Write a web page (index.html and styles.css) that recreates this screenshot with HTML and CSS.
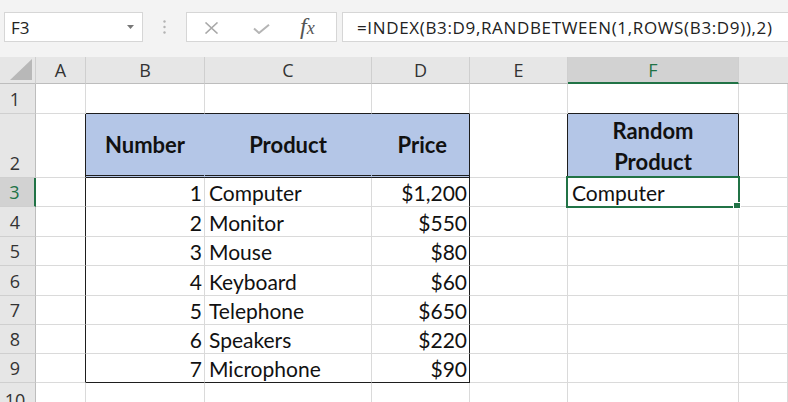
FILE: index.html
```html
<!DOCTYPE html>
<html>
<head>
<meta charset="utf-8">
<link rel="stylesheet" href="styles.css">
</head>
<body>
<div class="app">
  <div class="toolbar">
    <div class="namebox">
      <span class="nb-text">F3</span>
      <svg class="nb-arrow" width="7" height="4" viewBox="0 0 7 4"><path d="M0 0H7L3.5 4Z" fill="#777"/></svg>
    </div>
    <div class="sep">
      <svg width="3" height="14" viewBox="0 0 3 14"><circle cx="1.5" cy="1.5" r="1.2" fill="#b3b3b3"/><circle cx="1.5" cy="7" r="1.2" fill="#b3b3b3"/><circle cx="1.5" cy="12.5" r="1.2" fill="#b3b3b3"/></svg>
    </div>
    <div class="btns">
      <svg class="ic-x" width="15" height="12" viewBox="0 0 15 12"><path d="M1.5 0.5L13.5 11.5M13.5 0.5L1.5 11.5" stroke="#a8a8a8" stroke-width="1.6" fill="none"/></svg>
      <svg class="ic-check" width="17" height="10" viewBox="0 0 17 10"><path d="M1 4.5L6 9L16 0.8" stroke="#b5b5b5" stroke-width="2" fill="none"/></svg>
      <span class="ic-fx">f<span class="fx-x">x</span></span>
    </div>
    <div class="formula">=INDEX(B3:D9,RANDBETWEEN(1,ROWS(B3:D9)),2)</div>
  </div>
  <div class="sheet">
    <!-- header row -->
    <div class="corner"><svg width="22" height="21" viewBox="0 0 22 21"><path d="M22 0V21H0Z" fill="#b8b8b8"/></svg></div>
    <div class="ch">A</div>
    <div class="ch">B</div>
    <div class="ch">C</div>
    <div class="ch">D</div>
    <div class="ch">E</div>
    <div class="ch ch-sel">F</div>
    <div class="ch ch-last"></div>
    <!-- row 1 -->
    <div class="rh">1</div>
    <div class="c"></div>
    <div class="c b-bot"></div>
    <div class="c b-bot"></div>
    <div class="c b-bot"></div>
    <div class="c"></div>
    <div class="c b-bot"></div>
    <div class="c"></div>
    <!-- row 2 -->
    <div class="rh">2</div>
    <div class="c b-right"></div>
    <div class="c th hide-right">Number</div>
    <div class="c th hide-right">Product</div>
    <div class="c th th-price b-right">Price</div>
    <div class="c b-right"></div>
    <div class="c th th-wrap b-right b-bot">Random<br>Product</div>
    <div class="c"></div>
    <!-- row 3 -->
    <div class="rh rh-sel">3</div>
    <div class="c b-right"></div>
    <div class="c num">1</div>
    <div class="c">Computer</div>
    <div class="c num b-right">$1,200</div>
    <div class="c"></div>
    <div class="c sel">Computer</div>
    <div class="c"></div>
    <!-- row 4 -->
    <div class="rh">4</div>
    <div class="c b-right"></div>
    <div class="c num">2</div>
    <div class="c">Monitor</div>
    <div class="c num b-right">$550</div>
    <div class="c"></div>
    <div class="c"></div>
    <div class="c"></div>
    <!-- row 5 -->
    <div class="rh">5</div>
    <div class="c b-right"></div>
    <div class="c num">3</div>
    <div class="c">Mouse</div>
    <div class="c num b-right">$80</div>
    <div class="c"></div>
    <div class="c"></div>
    <div class="c"></div>
    <!-- row 6 -->
    <div class="rh">6</div>
    <div class="c b-right"></div>
    <div class="c num">4</div>
    <div class="c">Keyboard</div>
    <div class="c num b-right">$60</div>
    <div class="c"></div>
    <div class="c"></div>
    <div class="c"></div>
    <!-- row 7 -->
    <div class="rh">7</div>
    <div class="c b-right"></div>
    <div class="c num">5</div>
    <div class="c">Telephone</div>
    <div class="c num b-right">$650</div>
    <div class="c"></div>
    <div class="c"></div>
    <div class="c"></div>
    <!-- row 8 -->
    <div class="rh">8</div>
    <div class="c b-right"></div>
    <div class="c num">6</div>
    <div class="c">Speakers</div>
    <div class="c num b-right">$220</div>
    <div class="c"></div>
    <div class="c"></div>
    <div class="c"></div>
    <!-- row 9 -->
    <div class="rh">9</div>
    <div class="c b-right"></div>
    <div class="c num b-bot">7</div>
    <div class="c b-bot">Microphone</div>
    <div class="c num b-right b-bot">$90</div>
    <div class="c"></div>
    <div class="c"></div>
    <div class="c"></div>
    <!-- row 10 -->
    <div class="rh rh-last">10</div>
    <div class="c"></div>
    <div class="c"></div>
    <div class="c"></div>
    <div class="c"></div>
    <div class="c"></div>
    <div class="c"></div>
    <div class="c"></div>
  </div>
</div>
</body>
</html>
```

FILE: styles.css
```css
* { box-sizing: border-box; }
html, body { margin: 0; padding: 0; }
body {
  width: 788px;
  height: 402px;
  overflow: hidden;
  background: #ffffff;
  font-family: "Lato", "Open Sans", sans-serif;
}
.app { width: 788px; height: 402px; display: flex; flex-direction: column; }

/* toolbar */
.toolbar {
  height: 57px;
  flex: none;
  background: #f3f3f3;
  display: flex;
  align-items: flex-start;
  padding-top: 12px;
  padding-left: 4px;
}
.namebox {
  width: 139px;
  height: 30px;
  background: #fff;
  border: 1px solid #d6d6d6;
  display: flex;
  align-items: center;
  justify-content: space-between;
  padding: 0 8px 0 6px;
}
.nb-text {
  font-family: "Open Sans", sans-serif;
  font-size: 17px;
  color: #222;
}
.sep {
  width: 43px;
  height: 30px;
  display: flex;
  align-items: center;
  justify-content: center;
}
.btns {
  width: 151px;
  height: 30px;
  background: #fff;
  border: 1px solid #d6d6d6;
  display: flex;
  align-items: center;
  padding-left: 17px;
}
.ic-x { margin-top: 1px; }
.ic-check { margin-left: 34px; margin-top: 4px; }
.ic-fx {
  margin-left: 30px;
  font-family: "Liberation Serif", serif;
  font-style: italic;
  font-size: 24px;
  line-height: 24px;
  color: #555;
  letter-spacing: 0;
}
.fx-x { font-size: 18px; }
.formula {
  flex: 1;
  height: 30px;
  margin-left: 5px;
  background: #fff;
  border: 1px solid #d6d6d6;
  border-right: none;
  padding-left: 14px;
  display: flex;
  align-items: center;
  font-family: "Open Sans", sans-serif;
  font-size: 17px;
  letter-spacing: 0.65px;
  color: #222;
  white-space: nowrap;
}

/* sheet */
.sheet {
  flex: 1;
  display: grid;
  grid-template-columns: 36px 50px 119px 167px 98px 98px 171px 1fr;
  grid-template-rows: 27px 30px 64px 29px 30px 29px 30px 29px 29px 29px 1fr;
}
.corner {
  background: #e6e6e6;
  border-right: 1px solid #cfcfcf;
  border-bottom: 1px solid #bdbdbd;
  display: flex;
  align-items: flex-end;
  justify-content: flex-end;
  padding: 0 3px 3px 0;
}
.ch {
  background: #e6e6e6;
  border-right: 1px solid #cfcfcf;
  border-bottom: 1px solid #bdbdbd;
  display: flex;
  align-items: center;
  justify-content: center;
  font-family: "Open Sans", sans-serif;
  font-size: 18px;
  color: #333;
}
.ch-sel {
  background: #d2d2d2;
  color: #217346;
  border-bottom: 2px solid #217346;
}
.ch-last { border-right: none; }
.rh {
  background: #e6e6e6;
  border-right: 1px solid #bdbdbd;
  border-bottom: 1px solid #cfcfcf;
  display: flex;
  align-items: flex-end;
  justify-content: center;
  padding-right: 5px;
  padding-bottom: 1px;
  font-family: "Open Sans", sans-serif;
  font-size: 18px;
  color: #333;
  line-height: 26px;
}
.rh-last { align-items: flex-start; padding-top: 4px; overflow: hidden; }
.rh-sel {
  background: #d2d2d2;
  color: #217346;
  border-right: 2px solid #217346;
}
.c {
  border-right: 1px solid #dadada;
  border-bottom: 1px solid #dadada;
  display: flex;
  align-items: flex-end;
  padding: 0 2px 0 4px;
  font-size: 21px;
  color: #111;
  line-height: 27px;
  white-space: nowrap;
}
.num { justify-content: flex-end; padding-right: 2px; }
.b-right { border-right-color: #1e1e1e; }
.b-bot { border-bottom-color: #1e1e1e; }
.hide-right { border-right-color: #b4c6e7; }
.th {
  background: #b4c6e7;
  font-weight: 700;
  font-size: 22px;
  align-items: center;
  justify-content: center;
  border-bottom: 3px double #1e1e1e;
  padding: 0;
}
.th-price { justify-content: flex-end; padding-right: 22px; }
.th-wrap {
  text-align: center;
  line-height: 31px;
  border-bottom: 1px solid #1e1e1e;
}
.sel { position: relative; }
.sel::after {
  content: "";
  position: absolute;
  left: -2px;
  top: -2px;
  right: -2px;
  bottom: -2px;
  border: 2px solid #217346;
}
.sel::before {
  content: "";
  position: absolute;
  right: -3px;
  bottom: -3px;
  width: 6px;
  height: 5px;
  background: #217346;
  border: 1px solid #fff;
  z-index: 1;
}
```
